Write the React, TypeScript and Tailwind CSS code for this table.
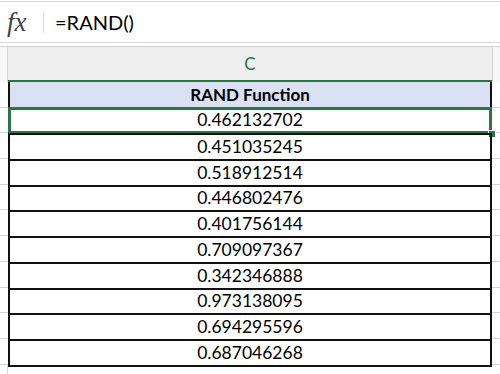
import React from "react";

const values = [
  "0.462132702",
  "0.451035245",
  "0.518912514",
  "0.446802476",
  "0.401756144",
  "0.709097367",
  "0.342346888",
  "0.973138095",
  "0.694295596",
  "0.687046268",
];

const cellFont = { fontFamily: "Lato, 'Open Sans', sans-serif" };

function Stub() {
  return <div className="w-[8px] h-full border-b border-[#d4d4d4] bg-white" />;
}

export default function App() {
  return (
    <div className="w-[500px] h-[374px] bg-white overflow-hidden" style={cellFont}>
      {/* formula bar */}
      <div className="mt-[1px] h-[42px] border-t border-b border-[#d6d6d6] flex items-center bg-white">
        <span
          className="w-[43px] pl-[7px] text-[27px] italic text-[#444] leading-none"
          style={{ fontFamily: "'Liberation Serif', serif" }}
        >
          fx
        </span>
        <div className="w-px h-[22px] bg-[#dcdcdc]" />
        <span className="ml-[11px] text-[20px] text-black leading-none">=RAND()</span>
      </div>

      {/* column headers */}
      <div className="mt-[3px] h-[36px] flex border-t border-[#d0d0d0] bg-[#f4f4f4]">
        <div className="w-[8px] bg-[#f7f7f7] border-r border-[#d6d6d6]" />
        <div className="w-[484px] flex items-center justify-center text-[17px] text-[#2e7345] border-b-2 border-[#2e7345] bg-[#efefef]">
          C
        </div>
        <div className="flex-1 bg-[#f7f7f7] border-l border-[#d6d6d6]" />
      </div>

      {/* grid */}
      <div className="flex flex-col">
        <div className="flex h-[25.7px]">
          <Stub />
          <div className="w-[484px] border-l-2 border-r-2 border-[#111] bg-[#d9e1f2] flex items-center justify-center text-[17px] font-bold text-black">
            RAND Function
          </div>
          <Stub />
        </div>
        {values.map((v, i) => (
          <div key={v} className="flex h-[25.7px]">
            <Stub />
            <div
              className={
                "relative w-[484px] border-l-2 border-r-2 border-[#111] flex items-center justify-center text-[17.5px] text-black " +
                (i === 0 ? "" : "border-t-2")
              }
            >
              {v}
              {i === 0 && (
                <>
                  <div className="absolute -left-[2px] -right-[2px] -top-[1px] -bottom-[1px] border-[3px] border-[#2e7345]" />
                  <div className="absolute -right-[6px] -bottom-[5px] w-[8px] h-[8px] bg-[#2e7345] border border-white" />
                </>
              )}
            </div>
            <Stub />
          </div>
        ))}
        <div className="flex h-[10px]">
          <div className="w-[8px] border-r border-[#d6d6d6]" />
          <div className="w-[484px] border-t-2 border-[#111]" />
        </div>
      </div>
    </div>
  );
}
